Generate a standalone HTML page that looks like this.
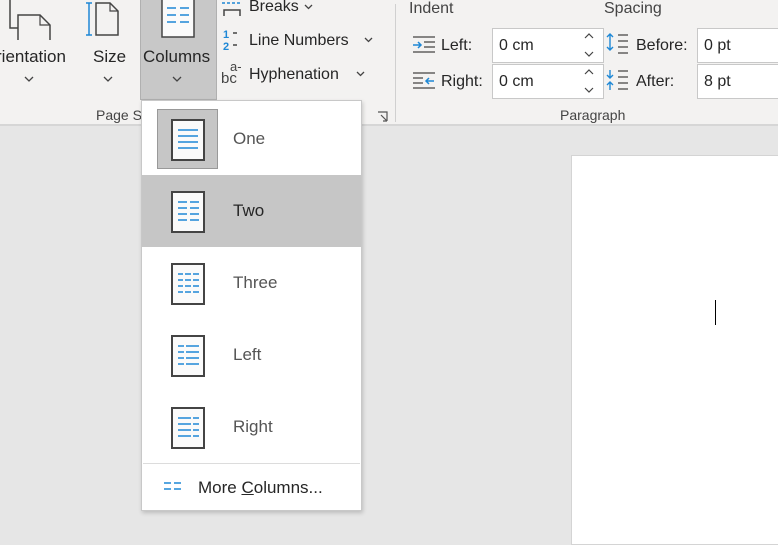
<!DOCTYPE html>
<html><head><meta charset="utf-8"><style>
*{margin:0;padding:0;box-sizing:border-box}
body{width:778px;height:537px;overflow:hidden;background:#e6e6e6;font-family:"Segoe UI","Liberation Sans",sans-serif;color:#262626;position:relative}
.a{position:absolute;white-space:nowrap}
.rib{position:absolute;left:0;top:0;width:778px;height:126px;background:#f3f2f1;border-bottom:2px solid #d6d6d6}
.t17{font-size:17px}
.t15{font-size:16px}
.inp{position:absolute;background:#fff;border:1px solid #c8c8c8;height:35px;font-size:16px;padding:8px 0 0 6px}
.menu{position:absolute;left:141px;top:100px;width:221px;height:411px;background:#fff;border:1px solid #c8c8c8;box-shadow:1px 2px 4px rgba(0,0,0,.18)}
.item{position:absolute;left:0;width:219px;height:72px}
.doc{position:absolute;left:29px;top:16px;width:34px;height:42px;border:2px solid #444;background:#fafafa}
.lbl{position:absolute;left:91px;top:26px;font-size:17px;color:#555}
</style></head><body>
<div class="rib"></div>
<svg class="a" style="left:0;top:0" width="140" height="40"><path d="M10 0v28h8" fill="none" stroke="#444" stroke-width="1.5"/><path d="M18 15h22l10 10v19h-32z" fill="#f3f2f1" stroke="#444" stroke-width="1.5"/><path d="M40 15v10h10" fill="none" stroke="#444" stroke-width="1.2"/>
<path d="M89 3v32" stroke="#1e88d6" stroke-width="1.5"/><path d="M86 3h6M86 35h6" stroke="#1e88d6" stroke-width="1.5"/><path d="M96 3h14l8 8v24h-22z" fill="none" stroke="#444" stroke-width="1.5"/><path d="M110 3v8h8" fill="none" stroke="#444" stroke-width="1.2"/></svg>
<div class="a t17" style="left:-4px;top:47px">rientation</div>
<svg class="a" style="left:24px;top:75px" width="10" height="8"><path d="M1 2l4 4 4-4" fill="none" stroke="#444" stroke-width="1.3"/></svg>
<div class="a t17" style="left:93px;top:47px">Size</div>
<svg class="a" style="left:103px;top:75px" width="10" height="8"><path d="M1 2l4 4 4-4" fill="none" stroke="#444" stroke-width="1.3"/></svg>
<div class="a" style="left:140px;top:0;width:77px;height:100px;background:#c8c8c8;border:1px solid #b0b0b0;border-top:none"></div>
<svg class="a" style="left:140px;top:0" width="77" height="40"><path d="M22 0v37h32V0" fill="#fafafa" stroke="#444" stroke-width="1.5"/><path d="M27 8h9M40 8h9M27 15h9M40 15h9M27 22h9M40 22h9" stroke="#1e88d6" stroke-width="1.5"/></svg>
<div class="a t17" style="left:143px;top:47px">Columns</div>
<svg class="a" style="left:172px;top:75px" width="10" height="8"><path d="M1 2l4 4 4-4" fill="none" stroke="#444" stroke-width="1.3"/></svg>
<svg class="a" style="left:218px;top:0" width="30" height="90"><path d="M4 3h20" stroke="#1e88d6" stroke-width="1.5" stroke-dasharray="3 2"/><path d="M6 16v-6h16v6" fill="none" stroke="#444" stroke-width="1.5"/>
<text x="5" y="38" font-size="11" font-weight="bold" fill="#1e88d6" font-family="Liberation Sans">1</text><text x="5" y="50" font-size="11" font-weight="bold" fill="#1e88d6" font-family="Liberation Sans">2</text><path d="M15 33h4M15 45h4" stroke="#444" stroke-width="1.5"/>
<text x="3" y="83" font-size="15" fill="#444" font-family="Liberation Sans">bc</text><text x="12" y="71" font-size="13" fill="#444" font-family="Liberation Sans">a-</text></svg>
<div class="a t15" style="left:249px;top:-2px">Breaks</div>
<div class="a t15" style="left:249px;top:32px">Line Numbers</div>
<div class="a t15" style="left:249px;top:66px">Hyphenation</div>
<svg class="a" style="left:304px;top:4px" width="9" height="7"><path d="M1 1l3.5 3.5L8 1" fill="none" stroke="#444" stroke-width="1.3"/></svg>
<svg class="a" style="left:364px;top:37px" width="9" height="7"><path d="M1 1l3.5 3.5L8 1" fill="none" stroke="#444" stroke-width="1.3"/></svg>
<svg class="a" style="left:356px;top:71px" width="9" height="7"><path d="M1 1l3.5 3.5L8 1" fill="none" stroke="#444" stroke-width="1.3"/></svg>
<div class="a" style="left:96px;top:107px;font-size:14px;color:#444">Page S</div>
<svg class="a" style="left:377px;top:111px" width="12" height="12"><path d="M1 1h9v9M4 4l6 6M6 10h4" fill="none" stroke="#555" stroke-width="1.2"/></svg>
<div class="a" style="left:395px;top:4px;width:1px;height:118px;background:#d0d0d0"></div>
<div class="a t15" style="left:409px;top:0px;color:#444">Indent</div>
<div class="a t15" style="left:604px;top:0px;color:#444">Spacing</div>
<svg class="a" style="left:410px;top:30px" width="30" height="70"><path d="M3 15h8M8 12l3 3-3 3" fill="none" stroke="#1e88d6" stroke-width="1.5"/><path d="M3 7h22M14 12h11M14 17h11M3 22h22" stroke="#444" stroke-width="1.3"/>
<path d="M16 51h8M19 48l-3 3 3 3" fill="none" stroke="#1e88d6" stroke-width="1.5"/><path d="M3 43h22M3 48h10M3 53h10M3 58h22" stroke="#444" stroke-width="1.3"/></svg>
<div class="a t15" style="left:441px;top:37px">Left:</div>
<div class="a t15" style="left:441px;top:73px">Right:</div>
<div class="inp" style="left:492px;top:28px;width:112px">0 cm</div>
<div class="inp" style="left:492px;top:64px;width:112px">0 cm</div>
<svg class="a" style="left:584px;top:33px" width="10" height="60"><path d="M1 5l4-4 4 4M1 19l4 4 4-4M1 41l4-4 4 4M1 55l4 4 4-4" fill="none" stroke="#444" stroke-width="1.2"/></svg>
<svg class="a" style="left:605px;top:30px" width="32" height="70"><path d="M5 4v16M2 7l3-3 3 3M2 17l3 3 3-3" fill="none" stroke="#1e88d6" stroke-width="1.4"/><path d="M13 5h10M13 11h10M13 17h10M13 23h10" stroke="#444" stroke-width="1.3"/>
<path d="M5 40v8M2 45l3 3 3-3M5 52v8M2 55l3-3 3 3" fill="none" stroke="#1e88d6" stroke-width="1.4"/><path d="M13 41h10M13 47h10M13 53h10M13 59h10" stroke="#444" stroke-width="1.3"/></svg>
<div class="a t15" style="left:636px;top:37px">Before:</div>
<div class="a t15" style="left:636px;top:73px">After:</div>
<div class="inp" style="left:697px;top:28px;width:90px">0 pt</div>
<div class="inp" style="left:697px;top:64px;width:90px">8 pt</div>
<div class="a" style="left:560px;top:107px;font-size:14px;color:#444">Paragraph</div>
<div class="a" style="left:571px;top:155px;width:210px;height:390px;background:#fff;border:1px solid #d4d4d4"></div>
<div class="a" style="left:715px;top:300px;width:1px;height:25px;background:#000"></div>
<div class="menu">
 <div class="item" style="top:2px"><div class="a" style="left:15px;top:6px;width:61px;height:60px;background:#c6c6c6;border:1px solid #999"></div>
  <div class="doc"><svg width="30" height="38"><path d="M5 9h20M5 15h20M5 21h20M5 27h20" stroke="#1e88d6" stroke-width="1.5"/></svg></div><div class="lbl">One</div></div>
 <div class="item" style="top:74px;background:#c6c6c6"><div class="doc"><svg width="30" height="38"><path d="M5 9h9M17 9h9M5 15h9M17 15h9M5 21h9M17 21h9M5 27h9M17 27h9" stroke="#1e88d6" stroke-width="1.5"/></svg></div><div class="lbl" style="color:#262626">Two</div></div>
 <div class="item" style="top:146px"><div class="doc"><svg width="30" height="38"><path d="M5 9h5M12 9h6M20 9h6M5 15h5M12 15h6M20 15h6M5 21h5M12 21h6M20 21h6M5 27h5M12 27h6M20 27h6" stroke="#1e88d6" stroke-width="1.5"/></svg></div><div class="lbl">Three</div></div>
 <div class="item" style="top:218px"><div class="doc"><svg width="30" height="38"><path d="M5 9h6M13 9h13M5 15h6M13 15h13M5 21h6M13 21h13M5 27h6M13 27h13" stroke="#1e88d6" stroke-width="1.5"/></svg></div><div class="lbl">Left</div></div>
 <div class="item" style="top:290px"><div class="doc"><svg width="30" height="38"><path d="M5 9h13M20 9h6M5 15h13M20 15h6M5 21h13M20 21h6M5 27h13M20 27h6" stroke="#1e88d6" stroke-width="1.5"/></svg></div><div class="lbl">Right</div></div>
 <div class="a" style="left:1px;top:362px;width:217px;height:1px;background:#dcdcdc"></div>
 <svg class="a" style="left:21px;top:380px" width="20" height="12"><path d="M1 2h7M11 2h7M1 8h7M11 8h7" stroke="#1e88d6" stroke-width="1.5"/></svg>
 <div class="a" style="left:56px;top:377px;font-size:17px;color:#262626">More <u>C</u>olumns...</div>
</div>
</body></html>
